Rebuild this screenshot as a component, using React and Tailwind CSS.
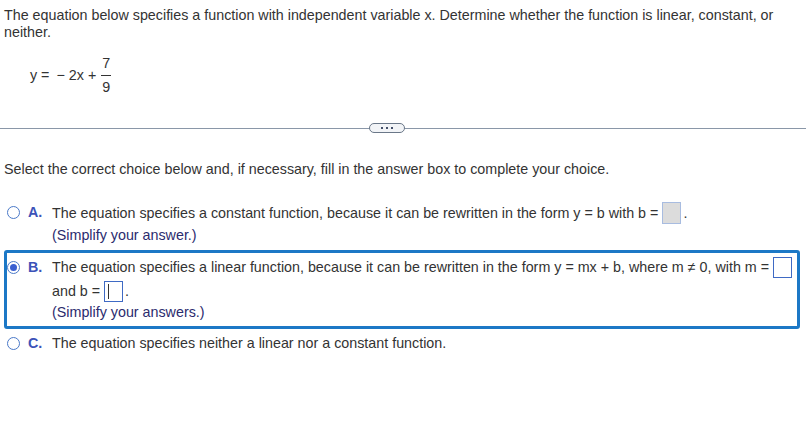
export default function App() {
  return (
    <div className="w-[806px] h-[444px] bg-white text-[#333] text-[14.3px] leading-[17px]" style={{ fontFamily: '"Liberation Sans", Arial, sans-serif' }}>
      <div className="px-[4px] pt-[7px]">
        <p className="leading-[17px]">The equation below specifies a function with independent variable x. Determine whether the function is linear, constant, or neither.</p>
        <div className="flex items-center pl-[26px] mt-[14px] h-[40px]">
          <span>y =</span>
          <span className="ml-[7px]">− 2x +</span>
          <span className="ml-[5px] inline-flex flex-col items-center leading-[15px]">
            <span>7</span>
            <span className="w-[10px] border-t border-[#333] my-[4px]"></span>
            <span>9</span>
          </span>
        </div>
      </div>
      <div className="relative mt-[33px] h-px bg-[#8a97a8]">
        <div className="absolute left-[369px] top-[-5px] w-[36px] h-[10px] rounded-full border border-[#6a7788] bg-[#f2f4f7] flex items-center justify-center gap-[3px]">
          <span className="w-[2px] h-[2px] bg-[#44506a]"></span>
          <span className="w-[2px] h-[2px] bg-[#44506a]"></span>
          <span className="w-[2px] h-[2px] bg-[#44506a]"></span>
        </div>
      </div>
      <p className="px-[4px] mt-[32px]">Select the correct choice below and, if necessary, fill in the answer box to complete your choice.</p>

      <div className="mt-[24px] flex px-[7px]">
        <span className="mt-[4px] w-[13px] h-[13px] rounded-full border-[1.5px] border-[#4a79c8] shrink-0"></span>
        <span className="ml-[8px] mt-[2px] w-[24px] font-bold text-[#3c52b8]">A.</span>
        <div>
          <div className="flex items-center h-[22px]">
            <span>The equation specifies a constant function, because it can be rewritten in the form y = b with b =</span>
            <span className="ml-[4px] w-[19px] h-[22px] border border-[#a8bce0] bg-[#dcdcdc]"></span>
            <span className="ml-[2px]">.</span>
          </div>
          <div className="mt-[3px] text-[#2b2b6e]">(Simplify your answer.)</div>
        </div>
      </div>

      <div className="mt-[6px] mx-[4px] w-[796px] h-[79px] border-[3px] border-[#1c78c6] rounded-[3px] flex pt-[4px]">
        <span className="mt-[4px] w-[13px] h-[13px] rounded-full border-[1.5px] border-[#4a79c8] shrink-0 flex items-center justify-center">
          <span className="w-[7px] h-[7px] rounded-full bg-[#3a5fd0]"></span>
        </span>
        <span className="ml-[8px] mt-[2px] w-[24px] font-bold text-[#3c52b8]">B.</span>
        <div>
          <div className="flex items-center h-[21px]">
            <span>The equation specifies a linear function, because it can be rewritten in the form y = mx + b, where m ≠ 0, with m =</span>
            <span className="ml-[4px] w-[19px] h-[21px] border border-[#3f6ac4] bg-white"></span>
          </div>
          <div className="flex items-center mt-[3px] h-[21px]">
            <span>and b =</span>
            <span className="ml-[4px] w-[19px] h-[21px] border border-[#3f6ac4] bg-white flex items-center pl-[3px]">
              <span className="w-px h-[15px] bg-[#333]"></span>
            </span>
            <span className="ml-[2px]">.</span>
          </div>
          <div className="mt-[2px] text-[#2b2b6e]">(Simplify your answers.)</div>
        </div>
      </div>

      <div className="mt-[6px] flex px-[7px] items-center">
        <span className="w-[13px] h-[13px] rounded-full border-[1.5px] border-[#4a79c8] shrink-0"></span>
        <span className="ml-[8px] w-[24px] font-bold text-[#3c52b8]">C.</span>
        <span>The equation specifies neither a linear nor a constant function.</span>
      </div>
    </div>
  );
}
